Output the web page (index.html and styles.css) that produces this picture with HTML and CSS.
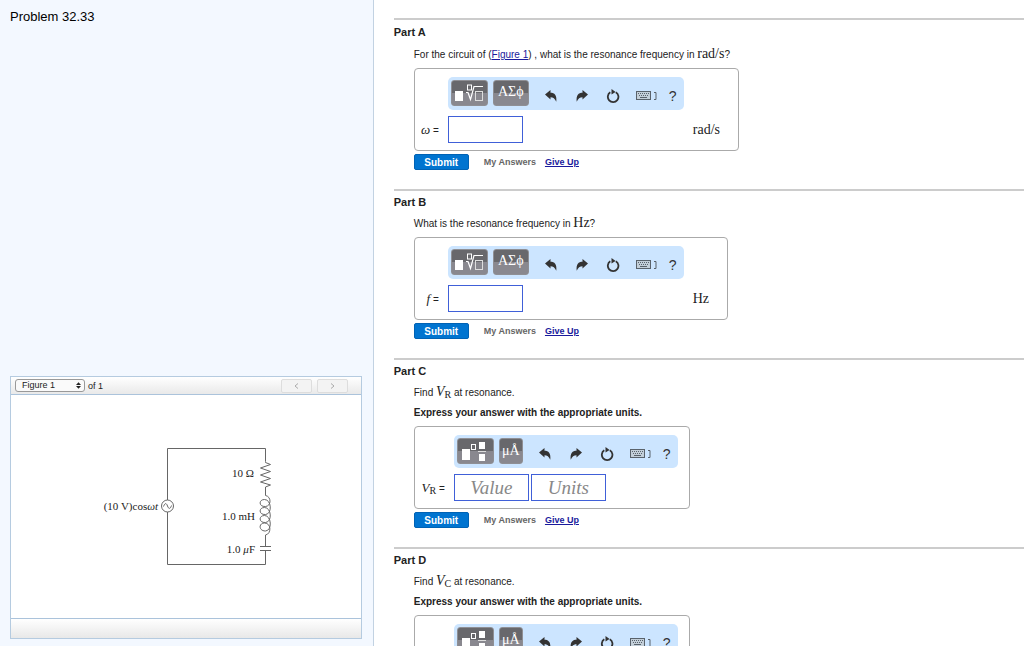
FILE: index.html
```html
<!DOCTYPE html>
<html lang="en">
<head>
  <meta charset="UTF-8">
  <title>Problem 32.33</title>
  <link rel="stylesheet" href="styles.css">
</head>
<body>

<!-- shared icons -->
<svg class="sprite" aria-hidden="true">
  <symbol id="undo" viewBox="0 0 12 12">
    <path d="M0 4.5 5.500 0V2.800C9.500 2.800 12 5.2 11.300 11.800 9.8 8.300 8.2 7.200 5.500 7.200V9.500z" fill="#333"/>
  </symbol>
  <symbol id="redo" viewBox="0 0 12 12">
    <path d="M12 4.5 6.500 0V2.800C2.500 2.800 0 5.2 .7 11.800 2.2 8.300 3.8 7.200 6.500 7.200V9.500z" fill="#333"/>
  </symbol>
  <symbol id="reset" viewBox="0 0 14 14">
    <path d="M9.8 3.2A5.3 5.3 0 1 1 4.300 3.300" fill="none" stroke="#333" stroke-width="1.8"/>
    <path d="M5.500 0 9.600 2.900 5.500 5.600z" fill="#333"/>
  </symbol>
  <symbol id="keyboard" viewBox="0 0 22 10">
    <rect x="0.5" y="0.5" width="14" height="8" fill="#c3cfd9" stroke="#59626b"/>
    <path d="M2 2.5h11M3 4.5h10" stroke="#59626b" stroke-dasharray="1 1"/>
    <path d="M4 6.5h7" stroke="#59626b"/>
    <path d="M18 1.5h2v7h-2" fill="none" stroke="#59626b"/>
  </symbol>
  <symbol id="root" viewBox="0 0 28 18">
    <rect x="0" y="7" width="8" height="10" fill="#fff"/>
    <rect x="12.5" y="1" width="4" height="5" fill="none" stroke="#fff"/>
    <path d="M11 8.500h2l2.5 7L19 2.5h9" fill="none" stroke="#fff" stroke-width="1.200"/>
    <rect x="20.500" y="7.500" width="7" height="9" fill="none" stroke="#ddd"/>
  </symbol>
  <symbol id="fraction" viewBox="0 0 26 20">
    <rect x="0" y="8" width="8" height="11" fill="#fff"/>
    <rect x="9.500" y="3.500" width="4" height="5" fill="none" stroke="#fff"/>
    <rect x="17" y="1" width="6" height="7" fill="#fff"/>
    <path d="M16 10.500h8" stroke="#ddd"/>
    <rect x="17" y="13" width="6" height="7" fill="#fff"/>
  </symbol>
</svg>

<div class="layout">
  <aside class="sidebar">
    <h1>Problem 32.33</h1>

    <section class="figure" id="figure1">
      <div class="figure-bar">
        <label class="figure-select">
          <select aria-label="Figure">
            <option>Figure 1</option>
          </select>
          <svg viewBox="0 0 6 8" aria-hidden="true"><path d="M0 3.300 3 0l3 3.300zM0 4.700 3 8l3-3.300z" fill="#222"/></svg>
        </label>
        <span>of 1</span>
        <div class="figure-nav">
          <button type="button" aria-label="Previous figure"><svg viewBox="0 0 5 6"><path d="M4 .5 1 3l3 2.500"/></svg></button>
          <button type="button" aria-label="Next figure"><svg viewBox="0 0 5 6"><path d="M1 .5 4 3 1 5.500"/></svg></button>
        </div>
      </div>
      <div class="figure-canvas">
        <svg class="circuit" viewBox="0 0 200 140">
          <g class="wire">
            <path d="M81.500 63V11.500h98v13M179.500 113.500v14h-98V75"/>
            <circle cx="81.500" cy="69" r="6"/>
            <path d="M77.500 69.500c1.500-4 3-3.500 4-.5s2.800 3.500 4-.5"/>
            <path d="M179.500 24.500v1l5 2-10 3.500 10 3.500-10 3.500 10 3.500-10 3.500 10 3-5 2v8.500"/>
            <path d="M179.500 58.500c6 1 6 10.500 0 11-7 .5-7-7-1-7 7 0 8 14.500 1 15-7 .5-7-7-1-7 7 0 8 14.500 1 15-7 .5-7-7-1-7 7 0 8 15 1 15.500-7 0-7-8-1-8 7 0 7 11 1 12v11"/>
            <path d="M174 109.500h11M174 113.500h11"/>
          </g>
          <g class="circuit-text">
            <text x="168" y="40">10 Ω</text>
            <text x="72" y="73">(10 V)cos<tspan class="it">ωt</tspan></text>
            <text x="169" y="83">1.0 mH</text>
            <text x="169" y="116">1.0 <tspan class="it">μ</tspan>F</text>
          </g>
        </svg>
      </div>
      <div class="figure-footer"></div>
    </section>
  </aside>

  <main class="parts">
    <section class="part">
      <h2>Part A</h2>
      <form class="part-body">
        <p>For the circuit of (<a href="#figure1">Figure 1</a>) , what is the resonance frequency in <span class="math">rad/s</span>?</p>
        <div class="answer">
          <div class="toolbar">
            <button type="button" class="tool wide" aria-label="Templates"><svg class="icon-root"><use href="#root"/></svg></button>
            <button type="button" class="tool greek">ΑΣϕ</button>
            <div class="actions">
              <button type="button" aria-label="Undo"><svg><use href="#undo"/></svg></button>
              <button type="button" aria-label="Redo"><svg><use href="#redo"/></svg></button>
              <button type="button" aria-label="Reset"><svg class="icon-reset"><use href="#reset"/></svg></button>
              <button type="button" class="keys" aria-label="Keyboard shortcuts"><svg class="icon-keyboard"><use href="#keyboard"/></svg></button>
              <button type="button" class="help">?</button>
            </div>
          </div>
          <label for="answer-a"><i>ω</i> =</label>
          <div class="fields"><input type="text" id="answer-a"></div>
          <span class="unit math">rad/s</span>
        </div>
        <div class="submit-row">
          <button type="button" class="submit">Submit</button>
          <span>My Answers</span>
          <a href="#">Give Up</a>
        </div>
      </form>
    </section>

    <section class="part">
      <h2>Part B</h2>
      <form class="part-body">
        <p>What is the resonance frequency in <span class="math">Hz</span>?</p>
        <div class="answer">
          <div class="toolbar">
            <button type="button" class="tool wide" aria-label="Templates"><svg class="icon-root"><use href="#root"/></svg></button>
            <button type="button" class="tool greek">ΑΣϕ</button>
            <div class="actions">
              <button type="button" aria-label="Undo"><svg><use href="#undo"/></svg></button>
              <button type="button" aria-label="Redo"><svg><use href="#redo"/></svg></button>
              <button type="button" aria-label="Reset"><svg class="icon-reset"><use href="#reset"/></svg></button>
              <button type="button" class="keys" aria-label="Keyboard shortcuts"><svg class="icon-keyboard"><use href="#keyboard"/></svg></button>
              <button type="button" class="help">?</button>
            </div>
          </div>
          <label for="answer-b"><i>f</i> =</label>
          <div class="fields"><input type="text" id="answer-b"></div>
          <span class="unit math">Hz</span>
        </div>
        <div class="submit-row">
          <button type="button" class="submit">Submit</button>
          <span>My Answers</span>
          <a href="#">Give Up</a>
        </div>
      </form>
    </section>

    <section class="part">
      <h2>Part C</h2>
      <form class="part-body">
        <p>Find <span class="math"><i>V</i><sub>R</sub></span> at resonance.</p>
        <p class="note">Express your answer with the appropriate units.</p>
        <div class="answer with-units">
          <div class="toolbar">
            <button type="button" class="tool wide" aria-label="Templates"><svg class="icon-fraction"><use href="#fraction"/></svg></button>
            <button type="button" class="tool">μÅ</button>
            <div class="actions">
              <button type="button" aria-label="Undo"><svg><use href="#undo"/></svg></button>
              <button type="button" aria-label="Redo"><svg><use href="#redo"/></svg></button>
              <button type="button" aria-label="Reset"><svg class="icon-reset"><use href="#reset"/></svg></button>
              <button type="button" class="keys" aria-label="Keyboard shortcuts"><svg class="icon-keyboard"><use href="#keyboard"/></svg></button>
              <button type="button" class="help">?</button>
            </div>
          </div>
          <label for="answer-c"><i>V</i><sub>R</sub> =</label>
          <div class="fields">
            <input type="text" id="answer-c" placeholder="Value">
            <input type="text" aria-label="Units" placeholder="Units">
          </div>
        </div>
        <div class="submit-row">
          <button type="button" class="submit">Submit</button>
          <span>My Answers</span>
          <a href="#">Give Up</a>
        </div>
      </form>
    </section>

    <section class="part">
      <h2>Part D</h2>
      <form class="part-body">
        <p>Find <span class="math"><i>V</i><sub>C</sub></span> at resonance.</p>
        <p class="note">Express your answer with the appropriate units.</p>
        <div class="answer with-units">
          <div class="toolbar">
            <button type="button" class="tool wide" aria-label="Templates"><svg class="icon-fraction"><use href="#fraction"/></svg></button>
            <button type="button" class="tool">μÅ</button>
            <div class="actions">
              <button type="button" aria-label="Undo"><svg><use href="#undo"/></svg></button>
              <button type="button" aria-label="Redo"><svg><use href="#redo"/></svg></button>
              <button type="button" aria-label="Reset"><svg class="icon-reset"><use href="#reset"/></svg></button>
              <button type="button" class="keys" aria-label="Keyboard shortcuts"><svg class="icon-keyboard"><use href="#keyboard"/></svg></button>
              <button type="button" class="help">?</button>
            </div>
          </div>
        </div>
      </form>
    </section>
  </main>
</div>

</body>
</html>
```
FILE: styles.css
```css
* {
  box-sizing: border-box;
}
body {
  margin: 0;
  background: #fff;
  color: #222;
  font-family: "Liberation Sans", Arial, sans-serif;
  font-size: 10px;
}
button, input, select {
  font-family: inherit;
  margin: 0;
  padding: 0;
}
h1, h2, p {
  margin: 0;
}
a {
  color: #1a1a9c;
}
.sprite {
  display: none;
}
.layout {
  display: grid;
  grid-template-columns: 36.5% 1fr;
  height: 100vh;
}

/* left side */
.sidebar {
  display: flex;
  flex-direction: column;
  justify-content: space-between;
  padding: 8px 11px 7px 10px;
  background: #f3f8ff;
  border-right: 1px solid #c2d2e2;
}
h1 {
  font-size: 13px;
  font-weight: normal;
  line-height: 18px;
  color: #000;
}
.figure {
  border: 1px solid #b5cbe0;
  background: #fff;
}
.figure-bar {
  display: flex;
  align-items: center;
  gap: 3px;
  height: 18px;
  padding: 0 13px 0 4px;
  background: linear-gradient(#fff, #e9e9e9);
  border-bottom: 1px solid #abc3db;
  font-size: 9px;
}
.figure-select {
  position: relative;
  display: flex;
}
.figure-select select {
  appearance: none;
  width: 70px;
  height: 13px;
  padding: 0 6px;
  border: 1px solid #999;
  border-radius: 3px;
  background: #fafafa;
  color: #222;
  font-size: 9px;
  line-height: 11px;
}
.figure-select svg {
  position: absolute;
  right: 4px;
  top: 3px;
  width: 5px;
  height: 7px;
  pointer-events: none;
}
.figure-nav {
  display: flex;
  gap: 5px;
  margin-left: auto;
}
.figure-nav button {
  display: flex;
  align-items: center;
  justify-content: center;
  width: 31px;
  height: 14px;
  border: 1px solid #ddd;
  border-radius: 2px;
  background: #f3f3f3;
}
.figure-nav svg {
  width: 5px;
  height: 6px;
  fill: none;
  stroke: #aaa;
}
.figure-canvas {
  display: flex;
  align-items: center;
  justify-content: center;
  height: 223px;
}
.circuit {
  width: 200px;
  height: 140px;
}
.wire {
  fill: none;
  stroke: #666;
}
.circuit-text {
  fill: #222;
  font-family: "Liberation Serif", "Times New Roman", serif;
  font-size: 11px;
  text-anchor: end;
}
.it {
  font-style: italic;
}
.figure-footer {
  height: 20px;
  background: linear-gradient(#fff, #e8e8e8);
  border-top: 1px solid #abc3db;
}

/* right side */
.parts {
  padding: 18px 0 0 20px;
  overflow-y: auto;
  scrollbar-width: none;
}
.part {
  border-top: 2px solid #ccc;
  padding-bottom: 19px;
}
h2 {
  font-size: 11px;
  line-height: 22px;
}
.part:first-child h2 {
  line-height: 24px;
}
.part-body {
  padding-left: 20px;
}
p {
  height: 18px;
  line-height: 21px;
}
.note {
  margin-top: 2px;
  font-weight: bold;
}
.math {
  font-family: "Liberation Serif", "Times New Roman", serif;
  font-size: 14px;
  line-height: 14px;
}
sub {
  font-size: 10px;
  line-height: 0;
  vertical-align: -2px;
}
.answer {
  display: grid;
  grid-template-columns: 17px auto auto;
  grid-template-rows: 33px 27px;
  gap: 6px 9px;
  width: max-content;
  margin-top: 6px;
  padding: 8px 18px 7px 7px;
  border: 1px solid #aaa;
  border-radius: 4px;
}
.answer.with-units {
  grid-template-columns: 23px auto;
  padding-right: 11px;
}
.answer label {
  grid-row: 2;
  align-self: center;
  justify-self: end;
  font-size: 10px;
  white-space: nowrap;
}
.answer label i {
  font-family: "Liberation Serif", "Times New Roman", serif;
  font-size: 13px;
}
.answer label sub {
  font-family: "Liberation Serif", "Times New Roman", serif;
}
.toolbar {
  grid-column: 2;
  display: flex;
  align-items: flex-start;
  gap: 5px;
  padding: 3px 0 3px 3px;
  background: #cce5ff;
  border-radius: 5px;
}
.tool {
  display: flex;
  align-items: center;
  justify-content: center;
  width: 24px;
  height: 26px;
  border: 1px solid #8f8f94;
  border-radius: 3px;
  background: linear-gradient(#68686c 50%, #89888f 50%);
  color: #fff;
  font-family: "Liberation Serif", "Times New Roman", serif;
  font-size: 14px;
}
.wide {
  width: 37px;
}
.greek {
  width: 36px;
  padding-bottom: 2px;
}
.actions {
  display: flex;
  margin-left: 2px;
  padding-top: 2px;
}
.actions button {
  display: flex;
  align-items: center;
  justify-content: center;
  width: 31px;
  height: 28px;
  border: 0;
  background: none;
}
.actions svg {
  width: 12px;
  height: 12px;
}
.actions .icon-reset {
  width: 14px;
  height: 14px;
}
.actions .keys {
  width: 33px;
  justify-content: flex-end;
  padding-right: 4px;
}
.actions .icon-keyboard {
  width: 22px;
  height: 10px;
}
.actions .help {
  width: 22px;
  color: #333;
  font-size: 14px;
}
.icon-root {
  width: 28px;
  height: 18px;
}
.icon-fraction {
  width: 26px;
  height: 20px;
}
.fields {
  grid-column: 2;
  display: flex;
  gap: 2px;
}
.fields input {
  width: 75px;
  height: 27px;
  border: 1px solid #4060d8;
  border-radius: 0;
  background: #fff;
  font-family: "Liberation Serif", "Times New Roman", serif;
  font-size: 19px;
}
.fields input::placeholder {
  color: #888;
  font-style: italic;
  text-align: center;
}
.unit {
  align-self: center;
}
.submit-row {
  display: flex;
  align-items: center;
  height: 16px;
  margin-top: 3px;
  font-size: 9px;
  line-height: 12px;
  font-weight: bold;
}
.submit-row span {
  margin: 0 9px 0 15px;
  color: #666;
}
.submit {
  width: 55px;
  height: 16px;
  border: 1px solid #0062b4;
  border-radius: 2px;
  background: #0074d0;
  color: #fff;
  font-size: 10px;
  font-weight: bold;
}
```
